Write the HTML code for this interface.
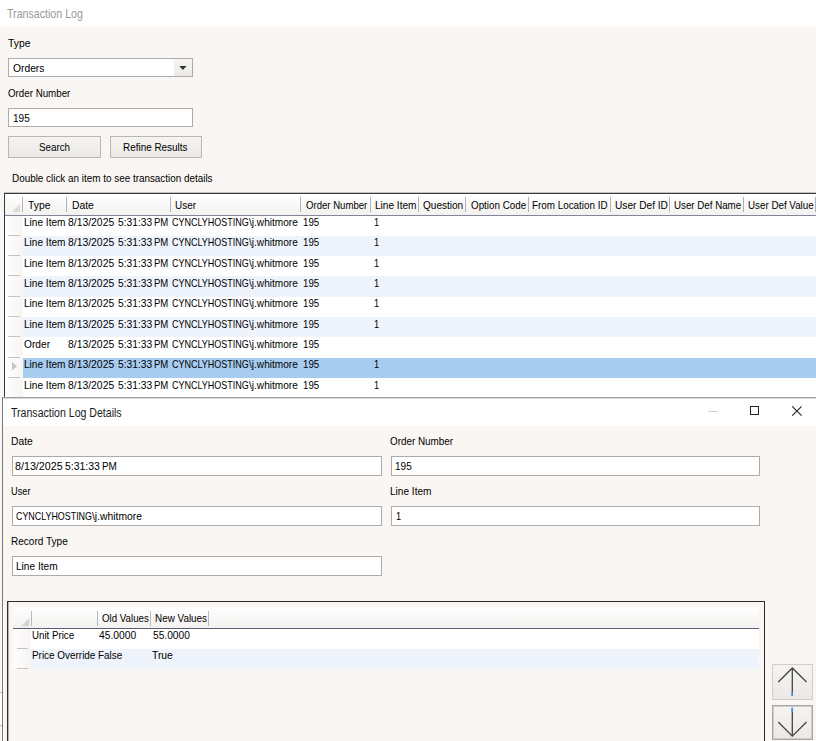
<!DOCTYPE html>
<html><head><meta charset="utf-8"><title>Transaction Log</title>
<style>
html,body{margin:0;padding:0;}
body{width:816px;height:741px;overflow:hidden;background:#f9f6f3;position:relative;font-family:"Liberation Sans",sans-serif;font-size:11px;color:#000;}
.a{position:absolute;white-space:nowrap;}
.t{position:absolute;white-space:nowrap;line-height:14px;height:14px;transform-origin:0 50%;}
.inp{position:absolute;background:#fff;border:1px solid #ababab;box-sizing:border-box;}
.btn{position:absolute;box-sizing:border-box;border:1px solid #b9b6b3;background:linear-gradient(#f6f4f2,#ebe8e5);}
.g{position:absolute;white-space:nowrap;height:14px;line-height:14px;font-size:0;}
.p{display:inline-block;vertical-align:top;height:14px;line-height:14px;font-size:11px;white-space:nowrap;transform-origin:0 50%;}
.sep{position:absolute;width:1px;background:#b0b0ba;}
</style></head><body>

<div class="a" style="left:0;top:0;width:816px;height:27px;background:#fff"></div>
<div class="a" style="left:0;top:27px;width:816px;height:1px;background:#fcfaf9"></div>
<div class="t" style="left:7.28px;top:6.70px;font-size:12px;color:#999999;transform:scaleX(0.8863);">Transaction Log</div>
<div class="t" style="left:8.01px;top:35.70px;transform:scaleX(0.9405);">Type</div>
<div class="inp" style="left:8px;top:58px;width:185px;height:19px"></div>
<div class="a" style="left:174px;top:59px;width:18px;height:17px;background:linear-gradient(#f7f5f3,#eceae7)"></div>
<svg class="a" style="left:178.8px;top:65px" width="9" height="6"><path d="M0.3 1 L7.5 1 L3.9 5 Z" fill="#333"/></svg>
<div class="t" style="left:12.53px;top:61.00px;transform:scaleX(0.9344);">Orders</div>
<div class="t" style="left:7.81px;top:85.70px;transform:scaleX(0.8869);">Order Number</div>
<div class="inp" style="left:8px;top:108px;width:185px;height:19px"></div>
<div class="t" style="left:12.70px;top:110.50px;transform:scaleX(0.9176);">195</div>
<div class="btn" style="left:8px;top:136px;width:93px;height:22px"></div>
<div class="t" style="left:39.16px;top:139.70px;transform:scaleX(0.8892);">Search</div>
<div class="btn" style="left:110px;top:136px;width:92px;height:22px"></div>
<div class="t" style="left:123.21px;top:139.70px;transform:scaleX(0.9011);">Refine Results</div>
<div class="t" style="left:11.91px;top:170.70px;transform:scaleX(0.8987);">Double click an item to see transaction details</div>
<div class="a" style="left:4px;top:193px;width:812px;height:209px;background:#fff;border-left:1px solid #3a3a3a;border-top:1px solid #3a3a3a;box-sizing:border-box"></div>
<div class="a" style="left:4px;top:192px;width:812px;height:1px;background:#c4c0bd"></div>
<div class="a" style="left:5px;top:194px;width:811px;height:21px;background:linear-gradient(#fff,#f4f2f0)"></div>
<div class="a" style="left:5px;top:215px;width:811px;height:1px;background:#85859a"></div>
<div class="a" style="left:5px;top:216px;width:18px;height:182px;background:linear-gradient(90deg,#fff,#f7f4f2)"></div>
<svg class="a" style="left:12px;top:204px" width="9" height="9"><path d="M8 0 L8 8 L0 8 Z" fill="#dcdad8"/></svg>
<div class="sep" style="left:22px;top:197px;height:15px"></div>
<div class="sep" style="left:66px;top:197px;height:15px"></div>
<div class="sep" style="left:170px;top:197px;height:15px"></div>
<div class="sep" style="left:300px;top:197px;height:15px"></div>
<div class="sep" style="left:370px;top:197px;height:15px"></div>
<div class="sep" style="left:418px;top:197px;height:15px"></div>
<div class="sep" style="left:465px;top:197px;height:15px"></div>
<div class="sep" style="left:528px;top:197px;height:15px"></div>
<div class="sep" style="left:610px;top:197px;height:15px"></div>
<div class="sep" style="left:669px;top:197px;height:15px"></div>
<div class="sep" style="left:743px;top:197px;height:15px"></div>
<div class="sep" style="left:815px;top:197px;height:15px"></div>
<div class="t" style="left:28.07px;top:197.50px;transform:scaleX(0.9384);">Type</div>
<div class="t" style="left:71.88px;top:197.50px;transform:scaleX(0.9417);">Date</div>
<div class="t" style="left:174.91px;top:197.50px;transform:scaleX(0.9040);">User</div>
<div class="t" style="left:305.86px;top:197.50px;transform:scaleX(0.8718);">Order Number</div>
<div class="t" style="left:375.20px;top:197.50px;transform:scaleX(0.9169);">Line Item</div>
<div class="t" style="left:423.24px;top:197.50px;transform:scaleX(0.9123);">Question</div>
<div class="t" style="left:470.55px;top:197.50px;transform:scaleX(0.8938);">Option Code</div>
<div class="t" style="left:532.22px;top:197.50px;transform:scaleX(0.8952);">From Location ID</div>
<div class="t" style="left:614.89px;top:197.50px;transform:scaleX(0.9214);">User Def ID</div>
<div class="t" style="left:673.92px;top:197.50px;transform:scaleX(0.8859);">User Def Name</div>
<div class="t" style="left:747.52px;top:197.50px;transform:scaleX(0.8898);">User Def Value</div>
<div class="a" style="left:23px;top:216px;width:793px;height:20px;background:#fff"></div>
<div class="a" style="left:8px;top:235px;width:12px;height:1px;background:#c4c4c4"></div>
<div class="t" style="left:24.00px;top:215.10px;transform:scaleX(0.9169);">Line Item</div>
<div class="g" style="left:68.33px;top:215.10px;"><span class="p" style="width:49.80px;transform:scaleX(0.9437)">8/13/2025</span> <span class="p" style="width:36.31px;transform:scaleX(0.9343)">5:31:33</span> <span class="p" style="width:14.80px;transform:scaleX(0.8678)">PM</span></div>
<div class="g" style="left:172.09px;top:215.10px;"><span class="p" style="width:76.91px;transform:scaleX(0.8184)">CYNCLYHOSTING</span><span class="p" style="width:50.40px;transform:scaleX(0.9175)">\j.whitmore</span></div>
<div class="t" style="left:302.93px;top:215.10px;transform:scaleX(0.8824);">195</div>
<div class="t" style="left:373.56px;top:215.10px;transform:scaleX(0.8421);">1</div>
<div class="a" style="left:23px;top:236px;width:793px;height:20px;background:#eef3fc"></div>
<div class="a" style="left:8px;top:255px;width:12px;height:1px;background:#c4c4c4"></div>
<div class="t" style="left:24.00px;top:235.43px;transform:scaleX(0.9169);">Line Item</div>
<div class="g" style="left:68.33px;top:235.43px;"><span class="p" style="width:49.80px;transform:scaleX(0.9437)">8/13/2025</span> <span class="p" style="width:36.31px;transform:scaleX(0.9343)">5:31:33</span> <span class="p" style="width:14.80px;transform:scaleX(0.8678)">PM</span></div>
<div class="g" style="left:172.09px;top:235.43px;"><span class="p" style="width:76.91px;transform:scaleX(0.8184)">CYNCLYHOSTING</span><span class="p" style="width:50.40px;transform:scaleX(0.9175)">\j.whitmore</span></div>
<div class="t" style="left:302.93px;top:235.43px;transform:scaleX(0.8824);">195</div>
<div class="t" style="left:373.56px;top:235.43px;transform:scaleX(0.8421);">1</div>
<div class="a" style="left:23px;top:256px;width:793px;height:20px;background:#fff"></div>
<div class="a" style="left:8px;top:275px;width:12px;height:1px;background:#c4c4c4"></div>
<div class="t" style="left:24.00px;top:255.77px;transform:scaleX(0.9169);">Line Item</div>
<div class="g" style="left:68.33px;top:255.77px;"><span class="p" style="width:49.80px;transform:scaleX(0.9437)">8/13/2025</span> <span class="p" style="width:36.31px;transform:scaleX(0.9343)">5:31:33</span> <span class="p" style="width:14.80px;transform:scaleX(0.8678)">PM</span></div>
<div class="g" style="left:172.09px;top:255.77px;"><span class="p" style="width:76.91px;transform:scaleX(0.8184)">CYNCLYHOSTING</span><span class="p" style="width:50.40px;transform:scaleX(0.9175)">\j.whitmore</span></div>
<div class="t" style="left:302.93px;top:255.77px;transform:scaleX(0.8824);">195</div>
<div class="t" style="left:373.56px;top:255.77px;transform:scaleX(0.8421);">1</div>
<div class="a" style="left:23px;top:276px;width:793px;height:21px;background:#eef3fc"></div>
<div class="a" style="left:8px;top:296px;width:12px;height:1px;background:#c4c4c4"></div>
<div class="t" style="left:24.00px;top:276.10px;transform:scaleX(0.9169);">Line Item</div>
<div class="g" style="left:68.33px;top:276.10px;"><span class="p" style="width:49.80px;transform:scaleX(0.9437)">8/13/2025</span> <span class="p" style="width:36.31px;transform:scaleX(0.9343)">5:31:33</span> <span class="p" style="width:14.80px;transform:scaleX(0.8678)">PM</span></div>
<div class="g" style="left:172.09px;top:276.10px;"><span class="p" style="width:76.91px;transform:scaleX(0.8184)">CYNCLYHOSTING</span><span class="p" style="width:50.40px;transform:scaleX(0.9175)">\j.whitmore</span></div>
<div class="t" style="left:302.93px;top:276.10px;transform:scaleX(0.8824);">195</div>
<div class="t" style="left:373.56px;top:276.10px;transform:scaleX(0.8421);">1</div>
<div class="a" style="left:23px;top:297px;width:793px;height:20px;background:#fff"></div>
<div class="a" style="left:8px;top:316px;width:12px;height:1px;background:#c4c4c4"></div>
<div class="t" style="left:24.00px;top:296.43px;transform:scaleX(0.9169);">Line Item</div>
<div class="g" style="left:68.33px;top:296.43px;"><span class="p" style="width:49.80px;transform:scaleX(0.9437)">8/13/2025</span> <span class="p" style="width:36.31px;transform:scaleX(0.9343)">5:31:33</span> <span class="p" style="width:14.80px;transform:scaleX(0.8678)">PM</span></div>
<div class="g" style="left:172.09px;top:296.43px;"><span class="p" style="width:76.91px;transform:scaleX(0.8184)">CYNCLYHOSTING</span><span class="p" style="width:50.40px;transform:scaleX(0.9175)">\j.whitmore</span></div>
<div class="t" style="left:302.93px;top:296.43px;transform:scaleX(0.8824);">195</div>
<div class="t" style="left:373.56px;top:296.43px;transform:scaleX(0.8421);">1</div>
<div class="a" style="left:23px;top:317px;width:793px;height:20px;background:#eef3fc"></div>
<div class="a" style="left:8px;top:336px;width:12px;height:1px;background:#c4c4c4"></div>
<div class="t" style="left:24.00px;top:316.77px;transform:scaleX(0.9169);">Line Item</div>
<div class="g" style="left:68.33px;top:316.77px;"><span class="p" style="width:49.80px;transform:scaleX(0.9437)">8/13/2025</span> <span class="p" style="width:36.31px;transform:scaleX(0.9343)">5:31:33</span> <span class="p" style="width:14.80px;transform:scaleX(0.8678)">PM</span></div>
<div class="g" style="left:172.09px;top:316.77px;"><span class="p" style="width:76.91px;transform:scaleX(0.8184)">CYNCLYHOSTING</span><span class="p" style="width:50.40px;transform:scaleX(0.9175)">\j.whitmore</span></div>
<div class="t" style="left:302.93px;top:316.77px;transform:scaleX(0.8824);">195</div>
<div class="t" style="left:373.56px;top:316.77px;transform:scaleX(0.8421);">1</div>
<div class="a" style="left:23px;top:337px;width:793px;height:21px;background:#fff"></div>
<div class="a" style="left:8px;top:357px;width:12px;height:1px;background:#c4c4c4"></div>
<div class="t" style="left:24.34px;top:337.10px;transform:scaleX(0.9273);">Order</div>
<div class="g" style="left:68.33px;top:337.10px;"><span class="p" style="width:49.80px;transform:scaleX(0.9437)">8/13/2025</span> <span class="p" style="width:36.31px;transform:scaleX(0.9343)">5:31:33</span> <span class="p" style="width:14.80px;transform:scaleX(0.8678)">PM</span></div>
<div class="g" style="left:172.09px;top:337.10px;"><span class="p" style="width:76.91px;transform:scaleX(0.8184)">CYNCLYHOSTING</span><span class="p" style="width:50.40px;transform:scaleX(0.9175)">\j.whitmore</span></div>
<div class="t" style="left:302.93px;top:337.10px;transform:scaleX(0.8824);">195</div>
<div class="a" style="left:23px;top:358px;width:793px;height:20px;background:#a7ccf0"></div>
<div class="a" style="left:8px;top:377px;width:12px;height:1px;background:#c4c4c4"></div>
<div class="t" style="left:24.00px;top:357.43px;transform:scaleX(0.9169);">Line Item</div>
<div class="g" style="left:68.33px;top:357.43px;"><span class="p" style="width:49.80px;transform:scaleX(0.9437)">8/13/2025</span> <span class="p" style="width:36.31px;transform:scaleX(0.9343)">5:31:33</span> <span class="p" style="width:14.80px;transform:scaleX(0.8678)">PM</span></div>
<div class="g" style="left:172.09px;top:357.43px;"><span class="p" style="width:76.91px;transform:scaleX(0.8184)">CYNCLYHOSTING</span><span class="p" style="width:50.40px;transform:scaleX(0.9175)">\j.whitmore</span></div>
<div class="t" style="left:302.93px;top:357.43px;transform:scaleX(0.8824);">195</div>
<div class="t" style="left:373.56px;top:357.43px;transform:scaleX(0.8421);">1</div>
<svg class="a" style="left:12px;top:362px" width="6" height="9"><path d="M0 0 L5 4.2 L0 8.4 Z" fill="#c4c4c4"/></svg>
<div class="a" style="left:23px;top:378px;width:793px;height:20px;background:#fff"></div>
<div class="t" style="left:24.00px;top:377.77px;transform:scaleX(0.9169);">Line Item</div>
<div class="g" style="left:68.33px;top:377.77px;"><span class="p" style="width:49.80px;transform:scaleX(0.9437)">8/13/2025</span> <span class="p" style="width:36.31px;transform:scaleX(0.9343)">5:31:33</span> <span class="p" style="width:14.80px;transform:scaleX(0.8678)">PM</span></div>
<div class="g" style="left:172.09px;top:377.77px;"><span class="p" style="width:76.91px;transform:scaleX(0.8184)">CYNCLYHOSTING</span><span class="p" style="width:50.40px;transform:scaleX(0.9175)">\j.whitmore</span></div>
<div class="t" style="left:302.93px;top:377.77px;transform:scaleX(0.8824);">195</div>
<div class="t" style="left:373.56px;top:377.77px;transform:scaleX(0.8421);">1</div>
<div class="a" style="left:2px;top:397px;width:814px;height:344px;background:#f9f6f3;border-left:1px solid #7a7a7a;border-top:1px solid #a0a0a0;box-sizing:border-box"></div>
<div class="a" style="left:3px;top:398px;width:813px;height:28px;background:#fff"></div>
<div class="a" style="left:3px;top:398px;width:813px;height:1px;background:#d8d8d8"></div>
<div class="t" style="left:11.08px;top:405.70px;font-size:12px;color:#1a1a1a;transform:scaleX(0.8809);">Transaction Log Details</div>
<div class="a" style="left:708px;top:411px;width:10px;height:1px;background:#cfcfcf"></div>
<div class="a" style="left:750px;top:406px;width:9px;height:9px;border:1px solid #222;box-sizing:border-box"></div>
<svg class="a" style="left:791px;top:406px" width="12" height="12"><path d="M1.2 0.4 L10.6 9.7 M10.6 0.4 L1.2 9.7" stroke="#222" stroke-width="1.1" fill="none"/></svg>
<div class="t" style="left:11.08px;top:434.30px;transform:scaleX(0.9371);">Date</div>
<div class="inp" style="left:12px;top:456px;width:370px;height:20px"></div>
<div class="g" style="left:15.31px;top:458.90px;"><span class="p" style="width:50.01px;transform:scaleX(0.9729)">8/13/2025</span> <span class="p" style="width:36.39px;transform:scaleX(0.9483)">5:31:33</span> <span class="p" style="width:15.30px;transform:scaleX(0.9017)">PM</span></div>
<div class="t" style="left:11.16px;top:484.10px;transform:scaleX(0.8407);">User</div>
<div class="inp" style="left:12px;top:506px;width:370px;height:20px"></div>
<div class="g" style="left:16.00px;top:508.60px;"><span class="p" style="width:76.20px;transform:scaleX(0.8086)">CYNCLYHOSTING</span><span class="p" style="width:51.50px;transform:scaleX(0.9384)">\j.whitmore</span></div>
<div class="t" style="left:11.10px;top:534.30px;transform:scaleX(0.9133);">Record Type</div>
<div class="inp" style="left:12px;top:556px;width:370px;height:20px"></div>
<div class="t" style="left:15.60px;top:558.80px;transform:scaleX(0.9192);">Line Item</div>
<div class="t" style="left:390.05px;top:434.30px;transform:scaleX(0.8977);">Order Number</div>
<div class="inp" style="left:391px;top:456px;width:369px;height:20px"></div>
<div class="t" style="left:395.20px;top:458.70px;transform:scaleX(0.9118);">195</div>
<div class="t" style="left:389.70px;top:484.30px;transform:scaleX(0.9169);">Line Item</div>
<div class="inp" style="left:391px;top:506px;width:369px;height:20px"></div>
<div class="t" style="left:395.76px;top:508.70px;transform:scaleX(0.8421);">1</div>
<div class="a" style="left:7px;top:601px;width:758px;height:145px;border:1px solid #2c2c2c;box-sizing:border-box;background:#f9f6f3"></div>
<div class="a" style="left:8px;top:602px;width:1px;height:140px;background:#b4b2b0"></div>
<div class="a" style="left:13px;top:607px;width:746px;height:21px;background:linear-gradient(#fff,#f4f2f0)"></div>
<div class="a" style="left:13px;top:628px;width:746px;height:1px;background:#5e5e74"></div>
<svg class="a" style="left:20.5px;top:617.7px" width="9" height="9"><path d="M8.3 0 L8.3 8.3 L0 8.3 Z" fill="#d4d4d4"/></svg>
<div class="sep" style="left:30.5px;top:611px;height:15px;background:#b9b9c4"></div>
<div class="sep" style="left:97px;top:611px;height:15px;background:#b9b9c4"></div>
<div class="sep" style="left:150px;top:611px;height:15px;background:#b9b9c4"></div>
<div class="sep" style="left:208px;top:611px;height:15px;background:#b9b9c4"></div>
<div class="t" style="left:101.96px;top:611.00px;transform:scaleX(0.8844);">Old Values</div>
<div class="t" style="left:155.11px;top:611.00px;transform:scaleX(0.8989);">New Values</div>
<div class="a" style="left:13px;top:629px;width:18px;height:40px;background:linear-gradient(90deg,#fff,#f7f4f2)"></div>
<div class="a" style="left:31px;top:629px;width:728px;height:20px;background:#fff"></div>
<div class="a" style="left:31px;top:648.5px;width:728px;height:20.5px;background:#eef3fc"></div>
<div class="a" style="left:17px;top:648px;width:11px;height:1px;background:#c4c4c4"></div>
<div class="a" style="left:17px;top:668px;width:11px;height:1px;background:#c4c4c4"></div>
<div class="t" style="left:32.03px;top:628.40px;transform:scaleX(0.8819);">Unit Price</div>
<div class="t" style="left:99.17px;top:628.40px;transform:scaleX(0.9329);">45.0000</div>
<div class="t" style="left:152.54px;top:628.40px;transform:scaleX(0.9260);">55.0000</div>
<div class="t" style="left:32.01px;top:648.40px;transform:scaleX(0.9014);">Price Override</div>
<div class="t" style="left:97.71px;top:648.40px;transform:scaleX(0.9020);">False</div>
<div class="t" style="left:152.17px;top:648.40px;transform:scaleX(0.9395);">True</div>
<div class="btn" style="left:772px;top:664px;width:41px;height:36px;border-color:#cfcccb"></div>
<svg class="a" style="left:772px;top:664px" width="41" height="36"><path d="M6.3 18 L20.3 4 L34.5 18 M20.3 4 L20.3 32" stroke="#444" stroke-width="1.3" fill="none"/><path d="M20.3 28.4 L20.3 32.2" stroke="#3a96f5" stroke-width="1.6"/></svg>
<div class="btn" style="left:772px;top:705px;width:41px;height:35px;border:1px solid #a9a7a5;box-shadow:inset 0 0 0 1px #cfcdcb"></div>
<svg class="a" style="left:772px;top:705px" width="41" height="36"><path d="M6.3 17 L20.3 31.2 L34.5 17 M20.3 31.2 L20.3 2.8" stroke="#444" stroke-width="1.3" fill="none"/><path d="M20.3 2.8 L20.3 7" stroke="#3a96f5" stroke-width="1.6"/></svg>
<div class="a" style="left:0;top:692px;width:2px;height:34px;background:#fff;border-top:1px solid #bbb;border-bottom:1px solid #bbb;box-sizing:border-box"></div>
</body></html>
